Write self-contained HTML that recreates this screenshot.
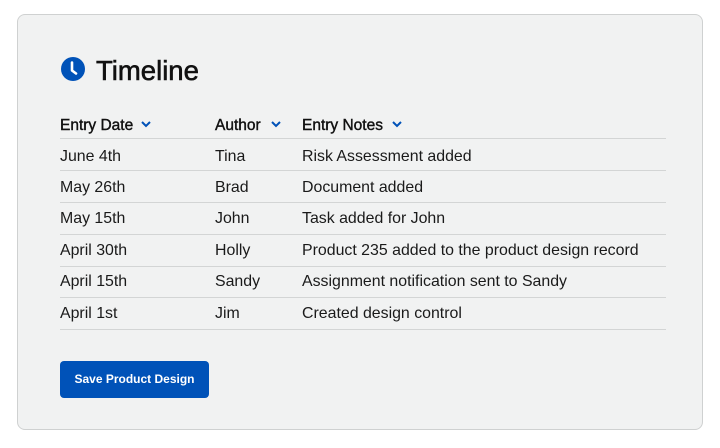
<!DOCTYPE html>
<html><head><style>
body{margin:0;width:720px;height:448px;background:#fff;font-family:"Liberation Sans",sans-serif;position:relative;overflow:hidden}
.card{position:absolute;left:17px;top:14px;width:684px;height:414px;background:#f1f2f2;border:1px solid #cfd1d1;border-radius:8px}
.t{position:absolute;white-space:nowrap;color:#1a1a1a}
.h{font-size:15.5px;color:#111;-webkit-text-stroke:0.4px #111}
.r{font-size:15.9px}
.line{position:absolute;left:60px;width:606px;height:0;border-top:1px solid #d3d5d5}
.btn{position:absolute;left:60px;top:361px;width:149px;height:37px;background:#0052b8;border-radius:4px;color:#fff;font-size:12px;font-weight:bold;text-align:center;line-height:37px}
</style></head><body>
<div class="card"></div>
<svg style="position:absolute;left:61px;top:57px" width="24" height="24" viewBox="0 0 24 24"><circle cx="12" cy="12" r="12" fill="#0052b8"/><path d="M11 5.5V13.5L15 16.5" stroke="#fff" stroke-width="2.6" fill="none" stroke-linecap="round" stroke-linejoin="round"/></svg>
<div class="t" style="left:96px;top:55px;font-size:27.5px;color:#111;-webkit-text-stroke:0.6px #111">Timeline</div>
<div class="t h" style="left:60px;top:117px">Entry Date</div>
<div class="t h" style="left:215px;top:117px">Author</div>
<div class="t h" style="left:302px;top:117px">Entry Notes</div>
<svg style="position:absolute;left:141px;top:121px" width="10" height="7"><path d="M1 1L5 5L9 1" stroke="#0052b8" stroke-width="2" fill="none"/></svg>
<svg style="position:absolute;left:271px;top:121px" width="10" height="7"><path d="M1 1L5 5L9 1" stroke="#0052b8" stroke-width="2" fill="none"/></svg>
<svg style="position:absolute;left:392px;top:121px" width="10" height="7"><path d="M1 1L5 5L9 1" stroke="#0052b8" stroke-width="2" fill="none"/></svg>
<div class="line" style="top:138px"></div>
<div class="t r" style="left:60px;top:148px">June 4th</div><div class="t r" style="left:215px;top:148px">Tina</div><div class="t r" style="left:302px;top:148px">Risk Assessment added</div>
<div class="line" style="top:170px"></div>
<div class="t r" style="left:60px;top:179px">May 26th</div><div class="t r" style="left:215px;top:179px">Brad</div><div class="t r" style="left:302px;top:179px">Document added</div>
<div class="line" style="top:202px"></div>
<div class="t r" style="left:60px;top:210px">May 15th</div><div class="t r" style="left:215px;top:210px">John</div><div class="t r" style="left:302px;top:210px">Task added for John</div>
<div class="line" style="top:234px"></div>
<div class="t r" style="left:60px;top:242px">April 30th</div><div class="t r" style="left:215px;top:242px">Holly</div><div class="t r" style="left:302px;top:242px">Product 235 added to the product design record</div>
<div class="line" style="top:266px"></div>
<div class="t r" style="left:60px;top:273px">April 15th</div><div class="t r" style="left:215px;top:273px">Sandy</div><div class="t r" style="left:302px;top:273px">Assignment notification sent to Sandy</div>
<div class="line" style="top:297px"></div>
<div class="t r" style="left:60px;top:305px">April 1st</div><div class="t r" style="left:215px;top:305px">Jim</div><div class="t r" style="left:302px;top:305px">Created design control</div>
<div class="line" style="top:329px"></div>
<div class="btn">Save Product Design</div>
</body></html>
